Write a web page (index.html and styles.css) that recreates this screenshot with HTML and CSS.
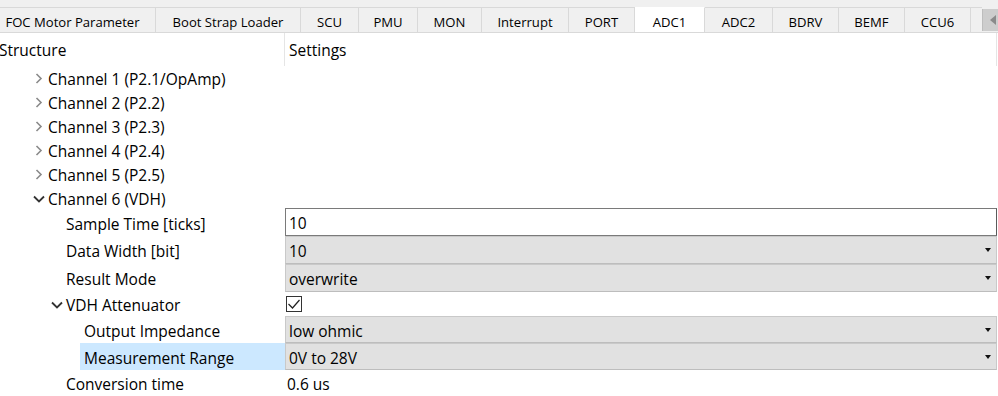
FILE: index.html
```html
<!DOCTYPE html>
<html>
<head>
<meta charset="utf-8">
<link rel="stylesheet" href="styles.css">
</head>
<body>
<div class="tabbar">
  <div class="tabs">
    <div class="tab t-foc">FOC Motor Parameter</div>
    <div class="tab t-boot">Boot Strap Loader</div>
    <div class="tab t-scu">SCU</div>
    <div class="tab t-pmu">PMU</div>
    <div class="tab t-mon">MON</div>
    <div class="tab t-int">Interrupt</div>
    <div class="tab t-port">PORT</div>
    <div class="tab t-adc1 active">ADC1</div>
    <div class="tab t-adc2">ADC2</div>
    <div class="tab t-bdrv">BDRV</div>
    <div class="tab t-bemf">BEMF</div>
    <div class="tab t-ccu6">CCU6</div>
  </div>
  <div class="scrollbtn">
    <svg width="7" height="10" viewBox="0 0 7 10"><path d="M6 0 L0 5 L6 10 Z" fill="#8a8a8a"/></svg>
  </div>
</div>

<div class="tree">
  <div class="row header">
    <div class="hcell hstruct">Structure</div>
    <div class="hcell hset">Settings</div>
  </div>

  <div class="row r24">
    <div class="label l1"><span class="chev"><svg width="8" height="11" viewBox="0 0 8 11"><path d="M1.5 1 L6 5.5 L1.5 10" fill="none" stroke="#8a8a8a" stroke-width="1.6"/></svg></span><span class="txt">Channel 1 (P2.1/OpAmp)</span></div>
    <div class="value"></div>
  </div>
  <div class="row r24">
    <div class="label l1"><span class="chev"><svg width="8" height="11" viewBox="0 0 8 11"><path d="M1.5 1 L6 5.5 L1.5 10" fill="none" stroke="#8a8a8a" stroke-width="1.6"/></svg></span><span class="txt">Channel 2 (P2.2)</span></div>
    <div class="value"></div>
  </div>
  <div class="row r24">
    <div class="label l1"><span class="chev"><svg width="8" height="11" viewBox="0 0 8 11"><path d="M1.5 1 L6 5.5 L1.5 10" fill="none" stroke="#8a8a8a" stroke-width="1.6"/></svg></span><span class="txt">Channel 3 (P2.3)</span></div>
    <div class="value"></div>
  </div>
  <div class="row r24">
    <div class="label l1"><span class="chev"><svg width="8" height="11" viewBox="0 0 8 11"><path d="M1.5 1 L6 5.5 L1.5 10" fill="none" stroke="#8a8a8a" stroke-width="1.6"/></svg></span><span class="txt">Channel 4 (P2.4)</span></div>
    <div class="value"></div>
  </div>
  <div class="row r24">
    <div class="label l1"><span class="chev"><svg width="8" height="11" viewBox="0 0 8 11"><path d="M1.5 1 L6 5.5 L1.5 10" fill="none" stroke="#8a8a8a" stroke-width="1.6"/></svg></span><span class="txt">Channel 5 (P2.5)</span></div>
    <div class="value"></div>
  </div>
  <div class="row r23">
    <div class="label l1"><span class="chev"><svg width="12" height="8" viewBox="0 0 12 8"><path d="M1 1.5 L6 6.5 L11 1.5" fill="none" stroke="#333" stroke-width="1.8"/></svg></span><span class="txt">Channel 6 (VDH)</span></div>
    <div class="value"></div>
  </div>

  <div class="row r27">
    <div class="label l2"><span class="chev"></span><span class="txt">Sample Time [ticks]</span></div>
    <div class="value"><div class="input">10</div></div>
  </div>
  <div class="row r28">
    <div class="label l2"><span class="chev"></span><span class="txt">Data Width [bit]</span></div>
    <div class="value"><div class="combo"><span class="ctext">10</span><span class="arrow"></span></div></div>
  </div>
  <div class="row r28">
    <div class="label l2"><span class="chev"></span><span class="txt">Result Mode</span></div>
    <div class="value"><div class="combo"><span class="ctext">overwrite</span><span class="arrow"></span></div></div>
  </div>
  <div class="row r24">
    <div class="label l2"><span class="chev"><svg width="12" height="8" viewBox="0 0 12 8"><path d="M1 1.5 L6 6.5 L11 1.5" fill="none" stroke="#333" stroke-width="1.8"/></svg></span><span class="txt">VDH Attenuator</span></div>
    <div class="value"><span class="check"><svg width="14" height="14" viewBox="0 0 14 14"><path d="M1.5 7 L5.5 11 L12.5 3" fill="none" stroke="#222" stroke-width="1.2"/></svg></span></div>
  </div>
  <div class="row r27">
    <div class="label l3"><span class="chev"></span><span class="txt">Output Impedance</span></div>
    <div class="value"><div class="combo"><span class="ctext">low ohmic</span><span class="arrow"></span></div></div>
  </div>
  <div class="row r27">
    <div class="label l3"><span class="chev"></span><span class="txt selected">Measurement Range</span></div>
    <div class="value"><div class="combo"><span class="ctext">0V to 28V</span><span class="arrow"></span></div></div>
  </div>
  <div class="row r26">
    <div class="label l2"><span class="chev"></span><span class="txt">Conversion time</span></div>
    <div class="value plain">0.6 us</div>
  </div>
</div>
</body>
</html>
```

FILE: styles.css
```css
html, body {
  margin: 0;
  padding: 0;
  background: #ffffff;
}
body {
  width: 998px;
  height: 396px;
  overflow: hidden;
  font-family: "Open Sans", "Noto Sans", sans-serif;
  font-size: 15.5px;
  color: #000;
}
.tabbar {
  height: 33px;
  background: #f0f0f0;
  display: flex;
  box-sizing: border-box;
  padding-top: 7px;
  border-bottom: 1px solid #d9d9d9;
  overflow: hidden;
  font-size: 13.1px;
}
.tabs {
  display: flex;
  flex: 1;
  border-top: 1px solid #d9d9d9;
  min-width: 0;
}
.tab {
  box-sizing: border-box;
  height: 25px;
  flex: none;
  display: flex;
  align-items: center;
  justify-content: center;
  border-right: 1px solid #d9d9d9;
  white-space: nowrap;
  background: #f0f0f0;
  padding-top: 2px;
}
.tab.active {
  background: #ffffff;
  height: 26px;
  border-top: 1px solid #ffffff;
  margin-top: -1px;
}
.t-foc { width: 166px; margin-left: -10px; }
.t-boot { width: 145px; }
.t-scu { width: 58px; }
.t-pmu { width: 59px; }
.t-mon { width: 64px; }
.t-int { width: 87px; }
.t-port { width: 66px; }
.t-adc1 { width: 70px; }
.t-adc2 { width: 68px; }
.t-bdrv { width: 66px; }
.t-bemf { width: 66px; }
.t-ccu6 { width: 66px; }
.scrollbtn {
  width: 14px;
  height: 22px;
  margin-top: 2px;
  background: #cdcdcd;
  border-left: 1px solid #bdbdbd;
  display: flex;
  align-items: center;
  justify-content: flex-end;
  padding-right: 1px;
  flex: none;
}
.tree {
  display: flex;
  flex-direction: column;
}
.row {
  display: grid;
  grid-template-columns: 285px 712px;
}
.header { height: 33px; }
.hcell {
  display: flex;
  align-items: center;
  height: 100%;
  box-sizing: border-box;
  padding-top: 1px;
}
.hstruct {
  border-right: 1px solid #e5e5e5;
  margin-left: -1px;
}
.hset {
  padding-left: 4px;
  border-right: 1px solid #e5e5e5;
}
.r23 { height: 23px; }
.r24 { height: 24px; }
.r26 { height: 26px; }
.r27 { height: 27px; }
.r28 { height: 28px; }
.label {
  display: flex;
  align-items: stretch;
  white-space: nowrap;
}
.l1 { padding-left: 30px; }
.l2 { padding-left: 48px; }
.l3 { padding-left: 66px; }
.chev {
  width: 18px;
  flex: none;
  display: flex;
  align-items: center;
  justify-content: center;
  padding-top: 1px;
}
.txt {
  flex: 1;
  display: flex;
  align-items: center;
  padding-top: 2px;
}
.txt.selected {
  background: #cce8ff;
  margin-left: -4px;
  padding-left: 4px;
}
.value {
  display: flex;
  align-items: stretch;
}
.value.plain {
  align-items: center;
  padding-left: 2px;
  padding-top: 2px;
}
.input {
  flex: 1;
  box-sizing: border-box;
  border: 1px solid #7a7a7a;
  border-right-color: #5a5a5a;
  background: #fff;
  padding-left: 3px;
  padding-top: 2px;
  display: flex;
  align-items: center;
  margin-top: -1px;
}
.combo {
  flex: 1;
  box-sizing: border-box;
  border: 1px solid #c9c9c9;
  border-bottom-color: #bdbdbd;
  background: #e1e1e1;
  padding-left: 3px;
  padding-right: 5px;
  display: flex;
  align-items: center;
  justify-content: space-between;
}
.ctext {
  padding-top: 2px;
}
.arrow {
  width: 0;
  height: 0;
  border-left: 3.5px solid transparent;
  border-right: 3.5px solid transparent;
  border-top: 4px solid #111;
}
.check {
  width: 16px;
  height: 16px;
  box-sizing: border-box;
  border: 1px solid #333;
  background: #fff;
  margin-left: 1px;
  align-self: center;
  display: flex;
  align-items: center;
  justify-content: center;
}
```
